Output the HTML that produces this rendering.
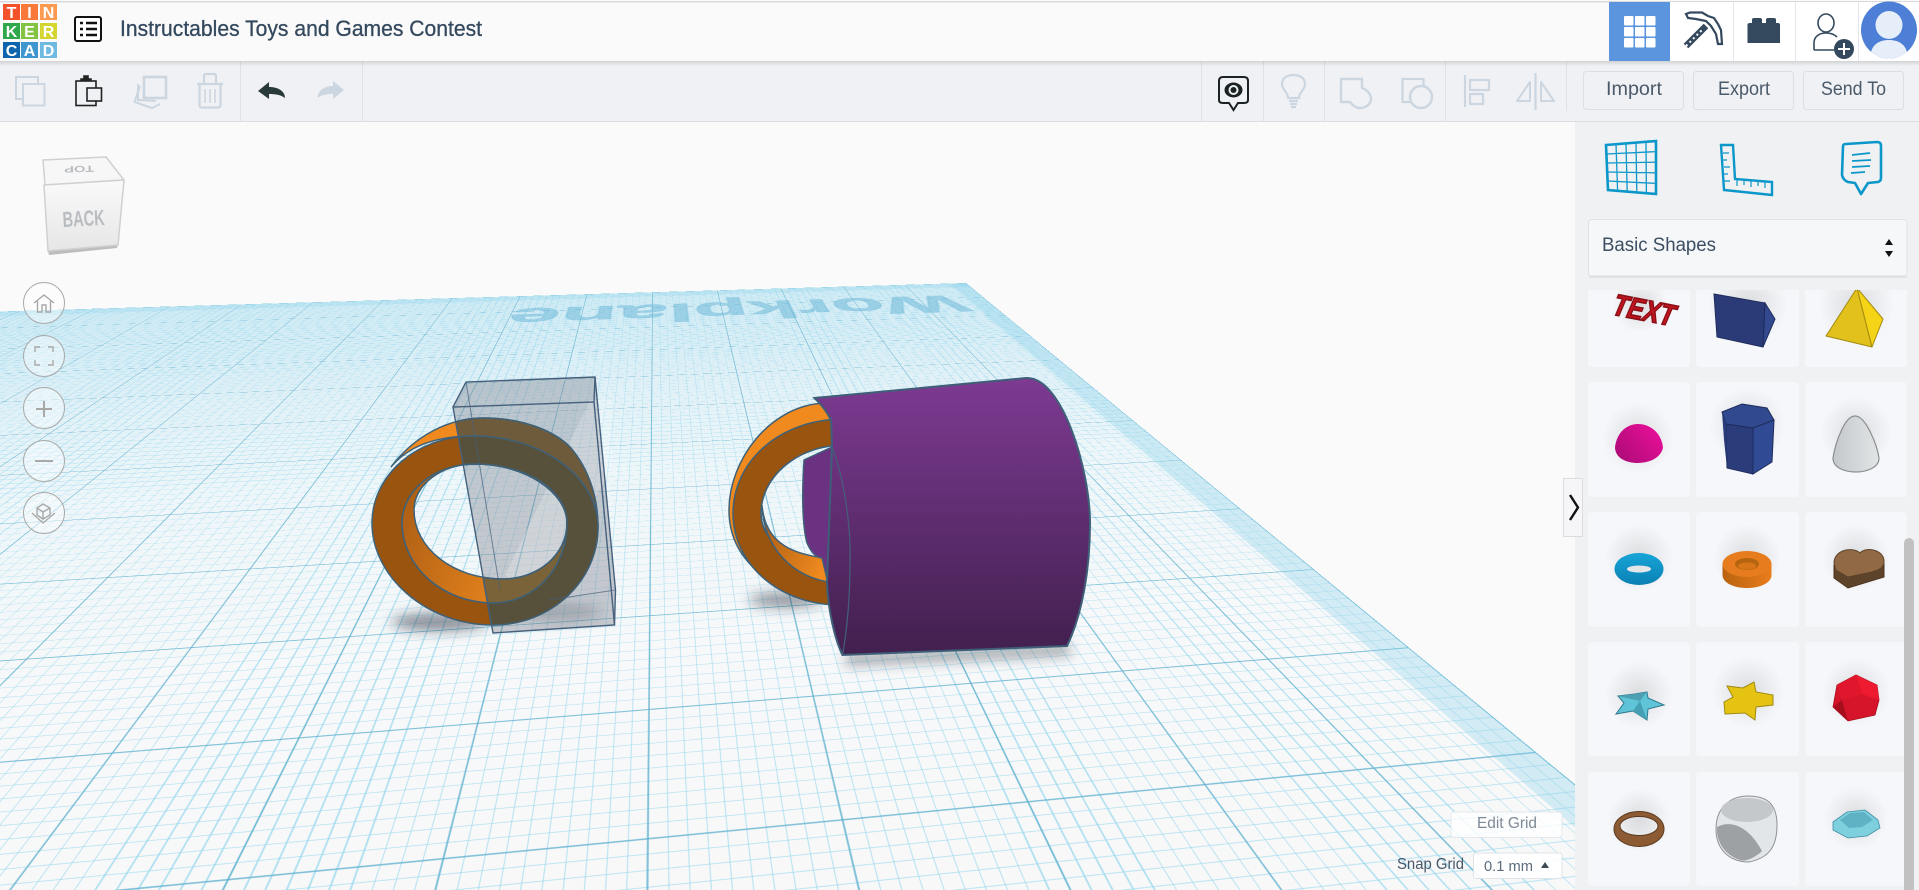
<!DOCTYPE html>
<html><head><meta charset="utf-8"><title>Tinkercad</title>
<style>
html,body{margin:0;padding:0;width:1919px;height:890px;overflow:hidden;background:#fafafa}
#view{position:absolute;left:0;top:0;width:1576px;height:890px;overflow:hidden;contain:paint;background:#fafafa}
#plane{position:absolute;left:0;top:0;width:4000px;height:2500px;transform-origin:0 0;
transform:matrix3d(-.33843,-.00214,0,-.0000389,-.19486,-.00803,0,-.0002975,0,0,1,0,966,283,0,1);
background:
linear-gradient(90deg,rgba(125,205,232,.3) 0 54px,transparent 54px),
linear-gradient(180deg,rgba(125,205,232,.22) 0 50px,transparent 50px),
linear-gradient(180deg,#8ccde2 0 3px,transparent 3px),
repeating-linear-gradient(90deg,rgba(95,175,205,.72) 0 2px,transparent 2px 200px),
repeating-linear-gradient(180deg,transparent 0 174px,rgba(95,175,205,.72) 174px 176px,transparent 176px 200px),
repeating-linear-gradient(90deg,rgba(150,215,238,.72) 0 1.5px,transparent 1.5px 20px),
repeating-linear-gradient(180deg,transparent 0 14px,rgba(150,215,238,.72) 14px 15.5px,transparent 15.5px 20px),
linear-gradient(180deg,#cdeaf4 0,#dceff6 700px,#edf6f9 1300px,#f7f8f9 1900px,#f8f8f8 2500px)}
#plane svg{position:absolute;left:0;top:0}
#ui{position:absolute;left:0;top:0}
text{font-family:"Liberation Sans",sans-serif}
</style></head><body>
<div id="view"><div id="plane">
<svg width="4000" height="600"><text x="76" y="-144" transform="scale(1,-1)" font-size="261" font-weight="700" fill="#6fb9d8" fill-opacity=".55" stroke="#6fb9d8" stroke-opacity=".3" stroke-width="6">Workplane</text></svg>
</div></div>
<svg id="ui" width="1919" height="890" viewBox="0 0 1919 890">
<defs>
<linearGradient id="pur" x1="0" y1="0" x2="0" y2="1"><stop offset="0" stop-color="#7d3a92"/><stop offset="1" stop-color="#41204e"/></linearGradient>
<linearGradient id="cres" x1="0" y1="0" x2="1" y2=".4"><stop offset="0" stop-color="#a65a14"/><stop offset="1" stop-color="#f08a1e"/></linearGradient>
<linearGradient id="cube" x1="0" y1="0" x2="0" y2="1"><stop offset="0" stop-color="#fafafa"/><stop offset="1" stop-color="#e6e6e6"/></linearGradient>
<linearGradient id="hdr" x1="0" y1="0" x2="0" y2="1"><stop offset="0" stop-color="#000" stop-opacity=".13"/><stop offset="1" stop-color="#000" stop-opacity="0"/></linearGradient>
<linearGradient id="mag" x1="0" y1="1" x2="1" y2=".3"><stop offset="0" stop-color="#a80a75"/><stop offset="1" stop-color="#e60f98"/></linearGradient>
<linearGradient id="gry" x1="0" y1="0" x2="1" y2="0"><stop offset="0" stop-color="#c4c8cb"/><stop offset="1" stop-color="#e2e5e6"/></linearGradient>
<linearGradient id="tor" x1="0" y1="0" x2="0" y2="1"><stop offset="0" stop-color="#17a5d8"/><stop offset="1" stop-color="#0b80b4"/></linearGradient>
<linearGradient id="ora" x1="0" y1="0" x2="1" y2="0"><stop offset="0" stop-color="#b9620f"/><stop offset="1" stop-color="#e87d1c"/></linearGradient>
<radialGradient id="glow"><stop offset="0" stop-color="#000" stop-opacity=".11"/><stop offset="1" stop-color="#000" stop-opacity="0"/></radialGradient>
<filter id="b6" x="-50%" y="-200%" width="200%" height="500%"><feGaussianBlur stdDeviation="6"/></filter>
<clipPath id="boxclip"><polygon points="453,407 493,640 640,640 640,380 453,380"/></clipPath>
<clipPath id="row1"><rect x="1580" y="290" width="335" height="80"/></clipPath>
</defs>

<!-- shadows on workplane -->
<ellipse cx="440" cy="622" rx="48" ry="9" fill="#1e2a3c" fill-opacity=".5" filter="url(#b6)"/>
<ellipse cx="560" cy="612" rx="42" ry="9" fill="#1e2a3c" fill-opacity=".28" filter="url(#b6)"/>
<ellipse cx="785" cy="600" rx="36" ry="8" fill="#1e2a3c" fill-opacity=".45" filter="url(#b6)"/>
<path d="M846,660 L1070,650" stroke="#1e2a3c" stroke-opacity=".45" stroke-width="10" filter="url(#b6)" fill="none"/>

<!-- transparent box body -->
<polygon points="466,382 595,377 615.5,590 614.5,625 493,633 453,407" fill="#7c818f" fill-opacity=".4"/>
<polygon points="505,575 590,400 612,400 612,470 535,590" fill="#fff" fill-opacity=".2"/>

<!-- left ring -->
<g stroke="#3f6178" stroke-width="1.5">
<path d="M391,467 C415,435 450,418 483,418 C525,418 555,432 570,447 C590,470 598,500 598,527 C598,477 542,436 473,436 C430,436 405,450 391,467 Z" fill="#f08a1e"/>
<path d="M402,523 C402,490 435,464 475,464 C526,464 567,490 567,523 C567,568 535,603 493,603 C443,603 402,567 402,523 Z M414,510 C414,548 453,579 503,579 C538,579 567,555 567,523 C567,493 526,464 475,464 C441,464 414,485 414,510 Z" fill="url(#cres)" fill-rule="evenodd"/>
<path d="M372,523 C372,475 417,436 473,436 C542,436 598,477 598,527 C598,581 551,625 493,625 C427,625 372,577 372,523 Z M402,523 C402,567 443,603 493,603 C535,603 567,568 567,523 C567,490 526,464 475,464 C435,464 402,490 402,523 Z" fill="#99540f" fill-rule="evenodd"/>
</g>
<g clip-path="url(#boxclip)" stroke="#3f6178" stroke-width="1.5">
<path d="M391,467 C415,435 450,418 483,418 C525,418 555,432 570,447 C590,470 598,500 598,527 C598,477 542,436 473,436 C430,436 405,450 391,467 Z" fill="#6e5b3c"/>
<path d="M402,523 C402,490 435,464 475,464 C526,464 567,490 567,523 C567,568 535,603 493,603 C443,603 402,567 402,523 Z M414,510 C414,548 453,579 503,579 C538,579 567,555 567,523 C567,493 526,464 475,464 C441,464 414,485 414,510 Z" fill="#7a6239" fill-rule="evenodd"/>
<path d="M372,523 C372,475 417,436 473,436 C542,436 598,477 598,527 C598,581 551,625 493,625 C427,625 372,577 372,523 Z M402,523 C402,567 443,603 493,603 C535,603 567,568 567,523 C567,490 526,464 475,464 C435,464 402,490 402,523 Z" fill="#57503a" fill-rule="evenodd"/>
</g>
<!-- box lines -->
<g fill="none" stroke="#46607c" stroke-width="1.4">
<path d="M453,407 L466,382 L595,377 L594,402 L453,407 L493,633 L614.5,625 L594,402"/>
<path d="M595,377 L615.5,590 L614.5,625"/>
<path d="M466,382 L500,590 M615.5,590 L549,600" stroke-opacity=".7" stroke-width="1"/>
</g>

<!-- right ring -->
<g stroke="#3f6178" stroke-width="1.5">
<path d="M729,510 C729,460 770,405 825,403 L840,403 L840,605 L825,602 C770,590 729,560 729,510 Z M761,513 C761,545 795,560 840,560 L840,445 C795,447 761,478 761,513 Z" fill="#f08a1e" fill-rule="evenodd"/>
<path d="M733,513 C733,465 775,421 840,419 L840,605 C780,605 733,565 733,513 Z M761,513 C761,545 795,560 840,560 L840,445 C795,447 761,478 761,513 Z" fill="#99540f" fill-rule="evenodd"/>
<path d="M762,505 C763,545 790,578 835,583 L835,559 C795,556 765,545 762,505 Z" fill="url(#cres)"/>
</g>
<!-- purple cylinder -->
<path d="M832,447 L804,460 C802,490 802,525 807,543 C811,552 815,557 822,558 L828,583 L850,560 L850,440 Z" fill="#6b3282" stroke="#3f5f78" stroke-width="1.5"/>
<path d="M814.5,398 L1026,378 C1062,376 1090,470 1090,523 C1090,570 1082,615 1067,646 L842.5,655 C835,640 828,610 827,583 L832,447 L831,420 C826,410 820,403 814.5,398 Z" fill="url(#pur)" stroke="#3f5f78" stroke-width="2"/>
<path d="M832,447 C845,480 851,530 850,560 C850,600 847,630 842.5,655" fill="none" stroke="#44607a" stroke-width="1.2"/>

<!-- view cube -->
<polygon points="49,255 117,248 118,244 48,251" fill="#bdbdbd"/>
<polygon points="43,160 106,157 124,180 45,185" fill="#f7f7f7" stroke="#d0d0d0" stroke-width="1.5" stroke-linejoin="round"/>
<polygon points="44,185 124,180 118,245 48,251" fill="url(#cube)" stroke="#d0d0d0" stroke-width="1.5" stroke-linejoin="round"/>
<text transform="translate(84,226) rotate(-3)" text-anchor="middle" font-size="22" font-weight="700" fill="#b9bcc0" textLength="42" lengthAdjust="spacingAndGlyphs">BACK</text>
<text transform="translate(79,166) rotate(178)" text-anchor="middle" font-size="9" font-weight="700" fill="#b9bcc0" textLength="30" lengthAdjust="spacingAndGlyphs">TOP</text>

<!-- nav circles -->
<g fill="#fff" fill-opacity=".4" stroke="#a8a8a8" stroke-width="1">
<circle cx="44" cy="303" r="20.5"/><circle cx="44" cy="356" r="20.5"/><circle cx="44" cy="408" r="20.5"/><circle cx="44" cy="461" r="20.5"/><circle cx="44" cy="513" r="20.5"/>
</g>
<g fill="none" stroke="#a8a8a8" stroke-width="1.4">
<path d="M34,303 L44,295 L54,303 M37.5,301 V312 H42 V305 H46 V312 H50.5 V301"/>
<path d="M35,352 V347 H40 M48,347 H53 V352 M35,360 V365 H40 M48,365 H53 V360"/>
<path d="M36,409 H52 M44,401 V417" stroke-width="2"/>
<path d="M35,461 H53" stroke-width="2"/>
<path d="M43,504 L50,508 V515 L43,519 L37,515 V508 Z M37,508 L43,512 L50,508 M43,512 V519 M32,513 L43,523 L55,513"/>
</g>

<!-- edit grid / snap -->
<rect x="1451" y="812" width="111" height="25.5" rx="3" fill="#fff" fill-opacity=".8" stroke="#e4e8ec"/>
<text x="1477" y="828" font-size="15.5" fill="#7d8997" textLength="60" lengthAdjust="spacingAndGlyphs">Edit Grid</text>
<text x="1397" y="869" font-size="16" fill="#47586a" textLength="67" lengthAdjust="spacingAndGlyphs">Snap Grid</text>
<rect x="1473.5" y="853" width="88.5" height="25.5" rx="2" fill="#fff" fill-opacity=".9" stroke="#dfe3e8"/>
<text x="1484" y="871" font-size="15" fill="#5d6c7b" textLength="49" lengthAdjust="spacingAndGlyphs">0.1 mm</text>
<polygon points="1541,868 1549,868 1545,862" fill="#3e4a56"/>

<!-- side panel -->
<rect x="1575" y="122" width="344" height="768" fill="#f0f1f3"/>
<rect x="1563.5" y="478.5" width="19" height="58" fill="#f6f6f8" stroke="#dcdcdf"/>
<path d="M1570,495 L1578,507.5 L1570,520" fill="none" stroke="#111" stroke-width="2.4"/>

<!-- panel icons -->
<g fill="none" stroke="#0b97c9">
<polygon points="1606,145 1656,141 1656,194 1608,190" stroke-width="2.6"/>
<path stroke-width="1.3" d="M1606.3,154 L1656,151.6 M1606.7,163 L1656,162.2 M1607,172 L1656,172.8 M1607.5,181 L1656,183.4 M1616,144 L1617.6,191 M1626,143.4 L1627.2,192 M1636,142.6 L1636.8,192.4 M1646,141.8 L1646.4,193"/>
<path stroke-width="2.4" d="M1721,145 H1733 L1735,179 L1772,182 V195 L1724,190 Z"/>
<path stroke-width="1.2" d="M1723,153 H1729 M1723,160 H1727 M1724,167 H1730 M1724,174 H1728 M1724,181 H1730 M1737,180 V186 M1744,181 V185 M1751,181 V187 M1758,182 V186 M1765,182 V188"/>
<path stroke-width="2.6" stroke-linejoin="round" d="M1843,146 Q1843,144 1846,144 L1877,142 Q1881,142 1881,146 V178 Q1881,181 1878,182 L1868,183 L1861,194 L1855,183 L1848,182 Q1843,180 1842,175 Z"/>
<path stroke-width="1.7" d="M1852,155 L1870,153 M1852,161 L1871,160 M1852,167 L1870,166 M1851,173 L1865,172"/>
</g>

<!-- dropdown -->
<rect x="1588.5" y="219.5" width="318.5" height="56.5" rx="3" fill="#f6f7f9" stroke="#dfe2e6"/>
<rect x="1589" y="276" width="318" height="2" fill="#000" fill-opacity=".05"/>
<text x="1602" y="251" font-size="19" fill="#3c4e62" textLength="114" lengthAdjust="spacingAndGlyphs">Basic Shapes</text>
<polygon points="1885,245 1893,245 1889,239" fill="#111"/><polygon points="1885,251 1893,251 1889,257" fill="#111"/>

<!-- cards -->
<g fill="#f6f7fa">
<path d="M1588,290 H1690 V363 a4,4 0 0 1 -4,4 H1592 a4,4 0 0 1 -4,-4 Z"/>
<path d="M1696,290 H1799 V363 a4,4 0 0 1 -4,4 H1700 a4,4 0 0 1 -4,-4 Z"/>
<path d="M1805,290 H1907 V363 a4,4 0 0 1 -4,4 H1809 a4,4 0 0 1 -4,-4 Z"/>
<rect x="1588" y="382" width="102" height="115" rx="4"/><rect x="1696" y="382" width="103" height="115" rx="4"/><rect x="1805" y="382" width="102" height="115" rx="4"/>
<rect x="1588" y="512" width="102" height="115" rx="4"/><rect x="1696" y="512" width="103" height="115" rx="4"/><rect x="1805" y="512" width="102" height="115" rx="4"/>
<rect x="1588" y="642" width="102" height="114" rx="4"/><rect x="1696" y="642" width="103" height="114" rx="4"/><rect x="1805" y="642" width="102" height="114" rx="4"/>
<rect x="1588" y="772" width="102" height="114" rx="4"/><rect x="1696" y="772" width="103" height="114" rx="4"/><rect x="1805" y="772" width="102" height="114" rx="4"/>
</g>
<!-- glows -->
<g fill="url(#glow)">
<circle cx="1640" cy="305" r="28" clip-path="url(#row1)"/><circle cx="1748" cy="305" r="40" clip-path="url(#row1)"/><circle cx="1856" cy="305" r="38" clip-path="url(#row1)"/>
<circle cx="1638" cy="438" r="36"/><circle cx="1747" cy="425" r="38"/><circle cx="1856" cy="432" r="36"/>
<circle cx="1639" cy="558" r="34"/><circle cx="1747" cy="558" r="34"/><circle cx="1856" cy="558" r="34"/>
<circle cx="1639" cy="695" r="34"/><circle cx="1748" cy="692" r="36"/><circle cx="1856" cy="692" r="34"/>
<circle cx="1639" cy="820" r="32"/><circle cx="1856" cy="818" r="32"/>
</g>

<!-- row 1 -->
<text transform="translate(1610,314) rotate(11) skewX(-12)" font-size="30" font-weight="700" fill="#c0141f" stroke="#8a0f16" stroke-width="1.6" textLength="62" lengthAdjust="spacingAndGlyphs" clip-path="none">TEXT</text>
<polygon points="1714,294 1765,303 1763,347 1717,337" fill="#2b3b78" stroke="#1e2b5c"/>
<polygon points="1765,303 1775,319 1763,347" fill="#33498f" stroke="#1e2b5c"/>
<g clip-path="url(#row1)" stroke="#a08a10" stroke-linejoin="round"><polygon points="1857,288 1826,336 1872,347" fill="#e3c11c"/><polygon points="1857,288 1883,319 1872,347" fill="#f5d316"/></g>
<!-- row 2 -->
<path d="M1615,447 C1617,432 1627,424 1638,424 C1651,424 1662,434 1663,448 C1660,459 1648,463 1638,463 C1626,463 1615,458 1615,447 Z" fill="url(#mag)"/>
<polygon points="1726,424 1753,428 1753,474 1727,468" fill="#2b3c7b" stroke="#1e2b5c"/>
<polygon points="1753,428 1774,420 1772,462 1753,474" fill="#304a93" stroke="#1e2b5c"/>
<polygon points="1722,412 1742,404 1767,408 1774,420 1753,428 1726,424" fill="#31498f" stroke="#1e2b5c"/>
<polygon points="1722,412 1726,424 1727,468 1724,440" fill="#2b3c7b"/>
<path d="M1855,416 C1866,416 1877,445 1879,458 C1879,468 1866,472 1856,472 C1845,472 1833,468 1833,458 C1835,445 1844,416 1855,416 Z" fill="url(#gry)" stroke="#8b8e90" stroke-width="1.2"/>
<!-- row 3 -->
<path d="M1614.5,569 a24.5,16 0 1 0 49,0 a24.5,16 0 1 0 -49,0 Z M1627,569 a12,3.5 0 1 1 24,0 a12,3.5 0 1 1 -24,0 Z" fill="url(#tor)" fill-rule="evenodd"/>
<path d="M1722.5,564 V575 C1722.5,583 1734,588 1747,588 C1760,588 1771.5,583 1771.5,575 V564 Z" fill="url(#ora)"/>
<ellipse cx="1747" cy="564" rx="24.5" ry="13" fill="#e67c1d"/>
<ellipse cx="1747" cy="564" rx="12" ry="6" fill="#b5650f"/><ellipse cx="1747" cy="566" rx="9" ry="3.5" fill="#d9761a"/>
<path d="M1834,565 V578 L1848,588 L1884,577 V564 Z" fill="#5d432a" stroke="#4b3420"/>
<path d="M1834,563 C1834,550 1852,546 1860,553 C1866,546 1885,550 1884,562 C1884,568 1878,570 1872,572 L1848,577 L1836,570 Z" fill="#916a45" stroke="#5d432a"/>
<!-- row 4 -->
<polygon points="1618,696 1635,694 1647,692 1648,698 1664,705 1648,709 1647,720 1633,711 1616,714 1624,703" fill="#5fc4d8" stroke="#2f7a8c"/>
<polygon points="1618,696 1635,694 1647,692 1640,701" fill="#4d9fb2"/>
<polygon points="1640,701 1647,720 1633,711" fill="#46a0b4"/>
<polygon points="1727,686 1743,688 1754,682 1756,692 1773,695 1773,705 1756,707 1755,720 1745,713 1725,714 1724,702 1733,697" fill="#e5c312" stroke="#a08a10"/>
<polygon points="1833,707 1837,685 1856,675 1877,685 1879,700 1875,715 1848,721" fill="#d6142a" stroke="#a80f1e" stroke-width=".8"/>
<polygon points="1856,675 1877,685 1879,700 1862,694" fill="#ee1a30"/>
<polygon points="1837,685 1856,675 1862,694 1842,700" fill="#e0172c"/>
<polygon points="1833,707 1842,700 1848,721" fill="#a80f1e"/>
<!-- row 5 -->
<path d="M1614,829 a25,17.5 0 1 0 50,0 a25,17.5 0 1 0 -50,0 Z M1620,826 a19,9.5 0 1 1 38,0 a19,9.5 0 1 1 -38,0 Z" fill="#8c5a33" stroke="#5a3a20" fill-rule="evenodd"/>
<path d="M1716,829 C1716,806 1732,796 1748,796 C1765,796 1777,802 1777,825 C1777,848 1768,858 1749,862 C1730,862 1716,850 1716,829 Z" fill="#e3e6e8" stroke="#8e9194"/>
<ellipse cx="1747" cy="810" rx="26" ry="12" fill="#c5c8ca"/>
<path d="M1717,827 C1730,820 1748,825 1762,851 C1755,858 1745,862 1740,860 C1725,855 1716,842 1717,827 Z" fill="#9da1a3"/>
<polygon points="1833,822 1847,812 1865,810 1878,820 1880,828 1867,836 1848,838 1833,830" fill="#7fd0de" stroke="#3f8fa3" stroke-width=".8"/>
<polygon points="1840,820 1850,813 1864,812 1873,820 1862,827 1849,828" fill="#5fb1c4"/>

<!-- scrollbar -->
<path d="M1904,890 V543 a5,5 0 0 1 10,0 V890 Z" fill="#c1c1c1"/>

<!-- toolbar -->
<rect x="0" y="61" width="1919" height="60" fill="#f0f1f4"/>
<rect x="0" y="121" width="1919" height="1" fill="#dcdde0"/>
<g fill="#dfe1e5"><rect x="240" y="61" width="1" height="60"/><rect x="362" y="61" width="1" height="60"/><rect x="1201" y="61" width="1" height="60"/><rect x="1263" y="61" width="1" height="60"/><rect x="1324" y="61" width="1" height="60"/><rect x="1445" y="61" width="1" height="60"/><rect x="1566" y="61" width="1" height="50"/></g>

<!-- header -->
<rect x="0" y="0" width="1919" height="61" fill="#fafafa"/>
<rect x="0" y="1" width="1919" height="1.4" fill="#d9d9dc"/>
<rect x="0" y="61" width="1919" height="5" fill="url(#hdr)"/>
<rect x="1670" y="2" width="249" height="59" fill="#fff"/>
<rect x="1609" y="2" width="61" height="59" fill="#5b95dd"/>
<g fill="#e3e6ea"><rect x="1733" y="2" width="1" height="59"/><rect x="1795" y="2" width="1" height="59"/><rect x="1858" y="2" width="1" height="59"/></g>
<!-- logo -->
<rect x="3" y="4" width="17" height="16" fill="#f2512a"/><rect x="21" y="4" width="17" height="16" fill="#f9793b"/><rect x="40" y="4" width="17" height="16" fill="#fd9a4f"/>
<rect x="3" y="23" width="17" height="16" fill="#2ea84a"/><rect x="21" y="23" width="17" height="16" fill="#82c341"/><rect x="40" y="23" width="17" height="16" fill="#d4d62f"/>
<rect x="3" y="42" width="17" height="16" fill="#0e65ad"/><rect x="21" y="42" width="17" height="16" fill="#4097cf"/><rect x="40" y="42" width="17" height="16" fill="#6ebae1"/>
<g fill="#fff" font-size="16" font-weight="700" text-anchor="middle">
<text x="11.5" y="18">T</text><text x="29.5" y="18">I</text><text x="48.5" y="18">N</text>
<text x="11.5" y="37">K</text><text x="29.5" y="37">E</text><text x="48.5" y="37">R</text>
<text x="11.5" y="56">C</text><text x="29.5" y="56">A</text><text x="48.5" y="56">D</text>
</g>
<!-- list icon -->
<rect x="75" y="17" width="26" height="24" rx="2" fill="#fff" stroke="#111" stroke-width="2"/>
<path d="M80,23 h3 M86,23 h11 M80,29 h3 M86,29 h11 M80,35 h3 M86,35 h11" stroke="#111" stroke-width="2.4" fill="none"/>
<text x="120" y="36" font-size="22" fill="#34495e" stroke="#34495e" stroke-width=".3" textLength="362" lengthAdjust="spacingAndGlyphs">Instructables Toys and Games Contest</text>

<!-- header right icons -->
<g fill="#fff"><rect x="1624" y="16" width="9.5" height="9.5" rx="1"/><rect x="1635" y="16" width="9.5" height="9.5" rx="1"/><rect x="1646" y="16" width="9.5" height="9.5" rx="1"/>
<rect x="1624" y="27" width="9.5" height="9.5" rx="1"/><rect x="1635" y="27" width="9.5" height="9.5" rx="1"/><rect x="1646" y="27" width="9.5" height="9.5" rx="1"/>
<rect x="1624" y="38" width="9.5" height="9.5" rx="1"/><rect x="1635" y="38" width="9.5" height="9.5" rx="1"/><rect x="1646" y="38" width="9.5" height="9.5" rx="1"/></g>
<path d="M1686,46 L1706,26" stroke="#34495e" stroke-width="6.5" fill="none"/>
<path d="M1686,46 L1703,29" stroke="#fff" stroke-width="2" stroke-dasharray="2 3" fill="none"/>
<path d="M1686,14 L1690,12.5 H1702 L1708,16 L1714,18 L1718,24 L1721,30 L1722,44 H1718 L1716,34 L1711,26 L1706,21 L1696,19 L1688,18 Z" fill="#fff" stroke="#34495e" stroke-width="2.2"/>
<path d="M1747.5,25 Q1747.5,23 1750,23 H1752 V20 Q1752,18 1754,18 H1760 Q1762,18 1762,20 V23 H1766 V20 Q1766,18 1768,18 H1774 Q1776,18 1776,20 V23 H1778 Q1780,23 1780,25 V43 H1747.5 Z" fill="#34495e"/>
<g fill="none" stroke="#34495e" stroke-width="1.6"><ellipse cx="1826" cy="23" rx="8" ry="9"/><path d="M1814,50 V43 C1814,36 1820,33 1826,33 C1830,33 1834,34 1837,37 M1814,50 H1834"/></g>
<circle cx="1844" cy="49" r="10" fill="#34495e"/><path d="M1838,49 H1850 M1844,43 V55" stroke="#fff" stroke-width="2"/>
<ellipse cx="1889" cy="30" rx="28" ry="28.5" fill="#4d7fd6"/>
<ellipse cx="1889" cy="25" rx="13.5" ry="14" fill="#e6eefa"/>
<path d="M1871,52 C1873,44 1880,40 1889,40 C1898,40 1905,44 1907,52 C1902,56 1896,58.5 1889,58.5 C1882,58.5 1876,56 1871,52 Z" fill="#e6eefa"/>

<!-- toolbar left icons -->
<g fill="none" stroke="#ccd6e0" stroke-width="2">
<rect x="16" y="77" width="22" height="22"/><rect x="23" y="84" width="21.5" height="21.5" fill="#f0f1f4"/>
<path d="M140,86 L134.5,102 L152,108 L160,104"/>
<path d="M138,84 L138,100 L156,101"/>
<rect x="144" y="77" width="22" height="21" stroke-width="2.6" fill="#f0f1f4"/>
<path d="M197,84 H223 M204,83 V76 Q204,74 206,74 H214 Q216,74 216,76 V83" stroke-width="2.2"/>
<path d="M199.5,85 V105 Q199.5,107.5 202,107.5 H218 Q220.5,107.5 220.5,105 V85" stroke-width="2.2"/>
<path d="M205,89 V103 M210,89 V103 M215,89 V103" stroke-width="1.5"/>
</g>
<g fill="none" stroke="#222" stroke-width="1.6">
<rect x="76" y="81" width="20" height="24.5"/><rect x="87" y="88" width="14.5" height="13" fill="#f0f1f4"/>
<path d="M81,81 V79 H84 V76 H88 V79 H91 V81" fill="#222"/>
</g>
<path d="M258,91 L269,82 V87 C278,87 285,91 285,98 C281,95 276,94 269,94 V99 Z" fill="#2a3a3a"/>
<path d="M344,90 L333,81 V86 C324,86 317.5,91 317.5,98 C321,95 326,94 333,94 V99 Z" fill="#ccd6e0"/>

<!-- toolbar right icons -->
<path d="M1223,77 H1244 Q1248,77 1248,81 V100 Q1248,103 1244,103 H1238 L1233.5,110 L1229,103 H1223 Q1219,103 1219,100 V81 Q1219,77 1223,77 Z" fill="#f0f1f4" stroke="#1a2222" stroke-width="2"/>
<ellipse cx="1233.5" cy="90" rx="9" ry="7.5" fill="#1a2222"/><ellipse cx="1233.5" cy="90" rx="5" ry="5" fill="#f0f1f4"/><circle cx="1233.5" cy="90" r="3" fill="#1a2222"/>
<g fill="none" stroke="#ccd6e0" stroke-width="2.2">
<path d="M1288,98 C1288,92 1282,90 1282,84 C1282,78 1287,75 1293.5,75 C1300,75 1305,78 1305,84 C1305,90 1299,92 1299,98 Z"/>
<path d="M1289,101 H1298 M1290,104 H1297 M1291,107 H1296"/>
<path d="M1341,79 H1362 V88 C1368,90 1371,95 1371,99 C1371,104 1366,108 1360,108 C1356,108 1353,106 1350,102 H1341 Z" stroke-width="2.4"/>
<rect x="1402.5" y="79" width="21" height="23" stroke-width="2.2"/>
<circle cx="1421" cy="97" r="11" fill="#f0f1f4" stroke-width="2.4"/>
<path d="M1465,75 V107" stroke-width="2.2"/>
<rect x="1470" y="80" width="19" height="10" stroke-width="2.2"/><rect x="1470" y="94" width="13" height="10" stroke-width="2.2"/>
<path d="M1535.5,73 V110" stroke-width="2.2"/>
<path d="M1530,82 L1517,101 H1530 Z M1541,82 L1554,101 H1541 Z" stroke-width="2" stroke-linejoin="round"/>
</g>
<!-- buttons -->
<g fill="#f0f1f4" stroke="#dcdee2"><rect x="1583.5" y="71.5" width="100" height="38" rx="3"/><rect x="1693.5" y="71.5" width="100" height="38" rx="3"/><rect x="1803.5" y="71.5" width="100" height="38" rx="3"/></g>
<g font-size="19" fill="#4a5a6a"><text x="1606" y="95" textLength="56" lengthAdjust="spacingAndGlyphs">Import</text><text x="1718" y="95" textLength="52" lengthAdjust="spacingAndGlyphs">Export</text><text x="1821" y="95" textLength="65" lengthAdjust="spacingAndGlyphs">Send To</text></g>
</svg>
</body></html>
